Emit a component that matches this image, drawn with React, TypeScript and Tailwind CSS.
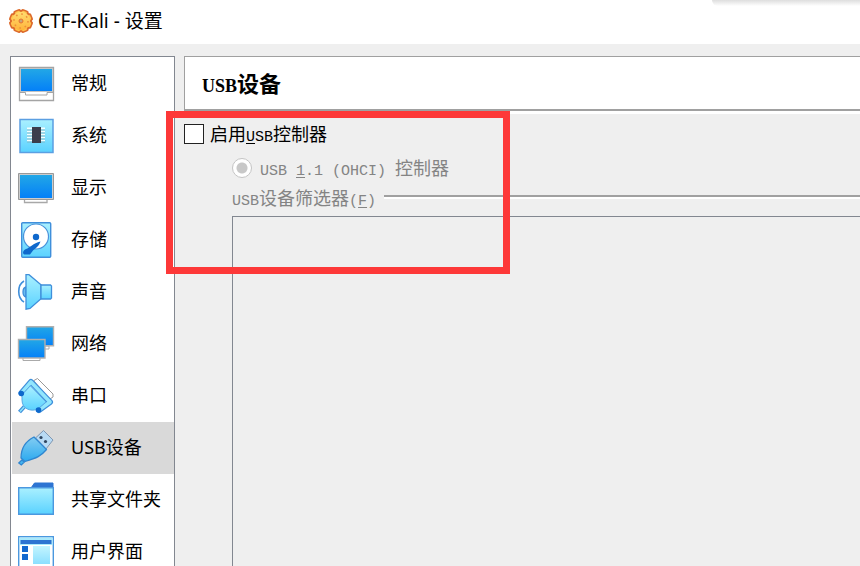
import React from 'react';

const DefsIcon = () => (
  <svg width="0" height="0" className="absolute" aria-hidden="true">
    <defs>
      <linearGradient id="screen" x1="0" y1="0" x2="0" y2="1">
        <stop offset="0" stopColor="#22a7e6" />
        <stop offset="1" stopColor="#0480f8" />
      </linearGradient>
      <linearGradient id="cyan" x1="0" y1="0" x2="0" y2="1">
        <stop offset="0" stopColor="#aaf0ff" />
        <stop offset="1" stopColor="#5ad2ff" />
      </linearGradient>
      <linearGradient id="plug" x1="0" y1="0" x2="0" y2="1">
        <stop offset="0" stopColor="#83cdf2" />
        <stop offset="1" stopColor="#2ba9ef" />
      </linearGradient>
      <linearGradient id="gear" x1="0" y1="0" x2="0" y2="1">
        <stop offset="0" stopColor="#ffdc70" />
        <stop offset="1" stopColor="#ffb43a" />
      </linearGradient>
    </defs>
  </svg>
);

const TEETH = [22.5, 67.5, 112.5, 157.5];

const GearIcon = () => (
  <svg width="26" height="26" viewBox="0 0 26 26" className="shrink-0" aria-hidden="true">
    <g fill="#dd6b2c">
      <circle cx="13" cy="13" r="11" />
      {TEETH.map(angle => (
        <rect key={angle} x="9" y="1" width="8" height="24" rx="2" transform={`rotate(${angle} 13 13)`} />
      ))}
    </g>
    <g fill="#ffc44e">
      {TEETH.map(angle => (
        <rect key={angle} x="10.4" y="2.6" width="5.2" height="20.8" rx="1.5" transform={`rotate(${angle} 13 13)`} />
      ))}
    </g>
    <circle cx="13" cy="13" r="9.2" fill="url(#gear)" />
    <circle cx="13" cy="13" r="7" fill="none" stroke="#ee8f38" strokeWidth="1.6" strokeDasharray="1.6 3.9" />
    <circle cx="13" cy="13" r="2" fill="#c9a37a" stroke="#e8732a" />
  </svg>
);

const GeneralIcon = () => (
  <>
    <path d="M1.5 1.5h34v33h-34z" fill="#fff" stroke="#a4a4a4" strokeWidth="1.3" />
    <path d="M2 26.5h5.5v2.5h21.5v-2.5h6" fill="none" stroke="#a4a4a4" />
    <path d="M2 2h33v24H2z" fill="#c4c4c4" />
    <path d="M3 3h31v22H3z" fill="url(#screen)" />
  </>
);

const SystemIcon = () => (
  <>
    <path d="M2 1.5h33v33H2z" fill="url(#cyan)" stroke="#5b9fe2" strokeWidth="1.5" />
    <path d="M9 10.5h18M9 13.5h18M9 16.5h18M9 19.5h18M9 22.5h18" stroke="#f4ffff" strokeWidth="1.8" />
    <path d="M9 12h18M9 15h18M9 18h18M9 21h18M9 24h18" stroke="#77b9cc" />
    <path d="M14 9h9v16h-9z" fill="#3b3e4c" />
  </>
);

const DisplayIcon = () => (
  <>
    <path d="M6.5 28v4.5H29V28z" fill="#fff" stroke="#a8a8a8" strokeWidth="1.3" />
    <path d="M.5 3.5h35v26H.5z" fill="#ccc" stroke="#999" />
    <path d="M2 5h32v23H2z" fill="url(#screen)" />
  </>
);

const StorageIcon = () => (
  <>
    <rect x="3.7" y="0.7" width="29" height="34.5" rx="1" fill="url(#cyan)" stroke="#3f8fdb" strokeWidth="1.4" />
    <circle cx="18" cy="14.5" r="12.5" fill="#fff" stroke="#4a93db" strokeWidth="1.2" />
    <circle cx="18" cy="15" r="3.2" fill="#0e68cc" />
    <path d="M22.5 19.5C21 24 18 26 15 28.5l-3 4H6c-2-2-.5-4.5 2-5.5 4-1 7-6 14.5-7.5z" fill="#0e68cc" />
  </>
);

const SoundIcon = () => (
  <g stroke="#3f8fdb" strokeWidth="1.3">
    <path d="M6 7C-1 11-1 24 6 28" fill="none" strokeWidth="1.6" />
    <path d="M8 13c-4 1-4 9 0 10z" fill="#6bbdf0" />
    <path d="M8 .7h3l12 10v14L12 34.5l-4 .7z" fill="url(#cyan)" />
    <path d="M23 11h9.5l1 1v12l-1 1H23z" fill="url(#cyan)" />
  </g>
);

const NetworkIcon = () => (
  <>
    <path d="M24 20v3h7v-3z" fill="#fff" stroke="#aaa" />
    <path d="M8.5 .7h27v19h-27z" fill="url(#screen)" stroke="#b0b0b0" strokeWidth="1.4" />
    <path d="M5 31v3.5h17V31z" fill="#fff" stroke="#aaa" />
    <path d="M.5 13.5H27V32H.5z" fill="url(#screen)" stroke="#b0b0b0" strokeWidth="1.4" />
  </>
);

const SerialIcon = () => (
  <g strokeLinecap="round" strokeLinejoin="round">
    <path d="M16 2.5l3.5-2L35 16v3l-3 2z" fill="#fff" stroke="#999" />
    <path d="M1.5 34l5-5.500" fill="none" stroke="#3f8fdb" strokeWidth="4" strokeLinecap="butt" />
    <path d="M2 33.5l5-5.500" fill="none" stroke="#8ce2fb" strokeWidth="1.6" strokeLinecap="butt" />
    <path d="M3.500 15L13 4l19 20-11 8" fill="none" stroke="#3f8fdb" strokeWidth="6" />
    <path d="M3.500 15L13 4l19 20-11 8" fill="none" stroke="#92e6fd" strokeWidth="3.6" />
    <path d="M12.500 8L28 24l-8 7C13 34 4 31 4 22v-5z" fill="url(#cyan)" stroke="#5aaae6" />
    <circle cx="3.3" cy="15.5" r="2.8" fill="#0e68cc" />
    <circle cx="20.500" cy="32" r="2.8" fill="#0e68cc" />
  </g>
);

const UsbIcon = () => (
  <>
    <path d="M25.5 .5L35 10l-7 9L17.5 8z" fill="#b8daf4" stroke="#7f97b2" strokeLinejoin="round" />
    <g fill="#2f4560">
      <circle cx="23" cy="7.5" r="1.6" />
      <circle cx="27.5" cy="11.5" r="1.6" />
    </g>
    <path d="M16 7l12.500 12.500C23 26 19 28 7 31.500L3 28C3 18 8 11 16 7z" fill="url(#plug)" stroke="#2f86d0" strokeWidth="1.3" strokeLinejoin="round" />
    <path d="M.8 33l3-3 2.500 2-3 3z" fill="#45b8f2" stroke="#2f86d0" strokeWidth="1.3" />
  </>
);

const FolderIcon = () => (
  <>
    <path d="M13 6l3.5-5H35v6z" fill="#2d74d2" stroke="#2d74d2" />
    <path d="M.7 5.7h34.6v26.5H.7z" fill="url(#cyan)" stroke="#4b98df" strokeWidth="1.4" />
  </>
);

const InterfaceIcon = () => (
  <>
    <path d="M.7 2.7h34.6v32H.7z" fill="#fff" stroke="#4b98df" strokeWidth="1.4" />
    <path d="M1.4 3.4h33.2V11H1.4z" fill="#a9e9fb" />
    <path d="M2.5 6h31v4h-31z" fill="#2d74d2" />
    <path d="M4 12h6v6H4zM4 20h6v6H4z" fill="#1269cf" />
    <path d="M15 12h17v18H15z" fill="url(#cyan)" opacity=".7" />
  </>
);

const CATEGORIES = [
  { name: '常规', Icon: GeneralIcon },
  { name: '系统', Icon: SystemIcon },
  { name: '显示', Icon: DisplayIcon },
  { name: '存储', Icon: StorageIcon },
  { name: '声音', Icon: SoundIcon },
  { name: '网络', Icon: NetworkIcon },
  { name: '串口', Icon: SerialIcon },
  { name: 'USB设备', Icon: UsbIcon },
  { name: '共享文件夹', Icon: FolderIcon },
  { name: '用户界面', Icon: InterfaceIcon },
];

// Half-width latin run set beside 18px ideographs
const Mono = ({ children }: { children: React.ReactNode }) => (
  <span className="whitespace-pre font-['Liberation_Mono',monospace] text-[15px]">{children}</span>
);

const Sidebar = () => {
  const [selected, setSelected] = React.useState('USB设备');

  return (
    <nav className="w-[165px] shrink-0 overflow-hidden border border-b-0 border-[#828790] bg-white p-px pr-0">
      {CATEGORIES.map(({ name, Icon }) => (
        <button
          key={name}
          onClick={() => setSelected(name)}
          className={`flex h-13 w-full items-center gap-[17px] pl-1.5 text-left text-lg whitespace-nowrap ${
            selected === name ? 'bg-[#d9d9d9]' : 'bg-white'
          }`}
        >
          <svg width="36" height="36" viewBox="0 0 36 36" className="shrink-0 overflow-visible" aria-hidden="true">
            <Icon />
          </svg>
          <span className="pb-0.5">{name}</span>
        </button>
      ))}
    </nav>
  );
};

const UsbPage = () => {
  const [enabled, setEnabled] = React.useState(false);

  return (
    <main className="relative flex min-w-0 flex-1 flex-col">
      <header className="flex h-[55px] shrink-0 items-center border-t border-b-2 border-l border-[#a0a0a0] bg-white pt-1 pl-[17px]">
        <h1 className="text-[22px] leading-6 font-bold">
          <span className="font-['Liberation_Serif',serif] text-lg">USB</span>设备
        </h1>
      </header>
      <div className="h-[3px] shrink-0 bg-white" />

      <label className="mt-2.5 flex h-5 items-center gap-1.5 self-start text-lg leading-5">
        <input
          type="checkbox"
          checked={enabled}
          onChange={e => setEnabled(e.target.checked)}
          className="size-5 appearance-none border border-[#222] bg-white checked:bg-[#333]"
        />
        <span className="pt-1">启用<Mono><u className="underline-offset-2">U</u>SB</Mono>控制器</span>
      </label>

      <fieldset disabled={!enabled} className="flex min-h-0 flex-1 flex-col pl-12 text-[#848484]">
        <label className="mt-3.5 flex h-5 items-center gap-2 self-start text-lg leading-5">
          <input
            type="radio"
            name="controller"
            defaultChecked
            className="size-5 appearance-none rounded-full border border-[#c4c4c4] bg-white checked:bg-[radial-gradient(circle,#c8c8c8_5px,#fff_6px)]"
          />
          <span className="pt-1"><Mono>USB <u className="underline-offset-2">1</u>.1 (OHCI) </Mono>控制器</span>
        </label>

        <div className="mt-2.5 flex h-5 items-center gap-2 text-lg leading-5">
          <span id="filters-label" className="shrink-0 pt-1">
            <Mono>USB</Mono>设备筛选器<Mono>(<u className="underline-offset-2">F</u>)</Mono>
          </span>
          <div className="-mt-0.5 h-1 flex-1 border-t-2 border-[#a0a0a0] bg-white" />
        </div>
        <div role="listbox" aria-labelledby="filters-label" className="mt-2 flex-1 border-t border-l border-[#828790]" />
      </fieldset>

      {/* Highlight frame */}
      <div className="pointer-events-none absolute top-[55px] -left-[18px] h-[163px] w-[344px] border-[7px] border-[#fd3838]" />
    </main>
  );
};

export default function App() {
  return (
    <div className="flex h-screen flex-col overflow-hidden bg-[#efefef] font-['Noto_Sans','Noto_Sans_CJK_SC',sans-serif] text-black">
      <DefsIcon />
      <header className="relative flex h-11 shrink-0 items-center gap-1 bg-white pb-0.5 pl-2">
        <GearIcon />
        <span className="text-[19px] leading-6">CTF-Kali - 设置</span>
        <div className="absolute top-0 right-0 h-1.5 w-[148px] rounded-bl-md bg-linear-to-b from-[#dedede] to-white" />
      </header>
      <div className="flex min-h-0 flex-1 gap-[9px] pt-3 pl-2.5">
        <Sidebar />
        <UsbPage />
      </div>
    </div>
  );
}
